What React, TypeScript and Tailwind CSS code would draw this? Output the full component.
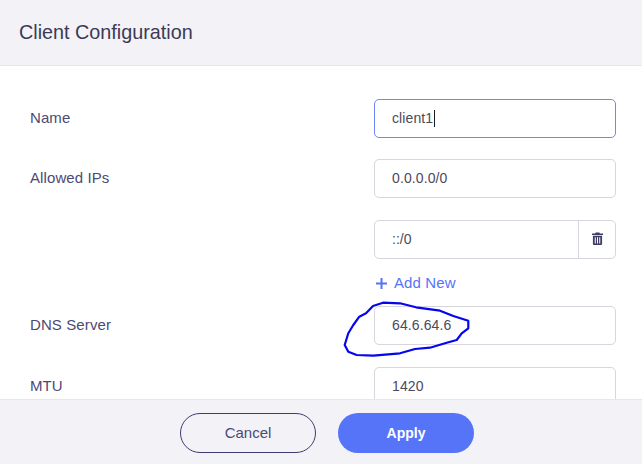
const fieldClass =
  "flex h-[39px] w-[242px] items-center rounded-[5px] border border-[#d6d6dc] bg-white pl-[17px] text-[14px] tracking-[0.1px] text-[#4a4a5a]";

function Label({ children }: { children: string }) {
  return <div className="w-[344px] shrink-0 text-[15px] leading-[37px] tracking-[0.1px] text-[#4b4a75]">{children}</div>;
}

function Field({ value }: { value: string }) {
  return <div className={fieldClass}>{value}</div>;
}

function TrashIcon() {
  return (
    <svg className="mb-[3px]" width="11" height="13" viewBox="0 0 12 14" aria-hidden="true">
      <path d="M4 0.5h4l.6 1H12v1.6H0V1.5h3.400z" fill="#3f3d66" />
      <path
        d="M1 4h10v8.600c0 .8-.6 1.400-1.400 1.400H2.400C1.600 14 1 13.400 1 12.600zM3 5.500v7h1.100v-7zM5.450 5.500v7h1.100v-7zM7.900 5.500v7H9v-7z"
        fill="#3f3d66"
        fillRule="evenodd"
      />
    </svg>
  );
}

function Scribble() {
  return (
    <svg
      className="pointer-events-none absolute left-[340px] top-[298px]"
      width="136"
      height="62"
      viewBox="340 298 136 62"
      fill="none"
      aria-hidden="true"
    >
      <path
        d="M416 307.300 L400 303.300 L383 302.700 L373 306 L366 313.300 L359.300 316.700 L353.300 325 L348.300 333.300 L344.700 345 L348.300 351.700 L356.700 355 L373.300 355.700 L400 353.300 L415 349 L430 347.700 L446.700 342.700 L456.700 340 L461.700 333.300 L468.300 328.300 L468.300 320.700 L453.300 316 L440 310.700 Z"
        stroke="#0505ee"
        strokeWidth="2.200"
        strokeLinejoin="round"
      />
    </svg>
  );
}

export default function App() {
  return (
    <div className="relative flex h-[464px] w-[642px] flex-col overflow-hidden bg-white font-['Liberation_Sans',Arial,sans-serif]">
      <header className="flex h-[66px] shrink-0 items-center border-b border-[#e6e6ee] bg-[#f2f2f7] pl-[19px] pt-[1px] text-[19.800px] text-[#3b3a55]">
        Client Configuration
      </header>

      <main className="min-h-0 flex-1 overflow-hidden pl-[30px] pt-[33px]">
        <div className="flex">
          <Label>Name</Label>
          <div className="flex h-[39px] w-[242px] items-center rounded-[5px] border border-[#6f88f9] bg-white pl-[17px] text-[14px] tracking-[0.1px] text-[#4a4a5a]">
            client1
            <span className="ml-px h-[17px] w-px bg-[#1a1a2a]" />
          </div>
        </div>

        <div className="mt-[21px] flex">
          <Label>Allowed IPs</Label>
          <Field value="0.0.0.0/0" />
        </div>

        <div className="mt-[22px] flex pl-[344px]">
          <div className="flex h-[39px] w-[242px] items-center rounded-[5px] border border-[#d6d6dc] bg-white text-[14px] text-[#4a4a5a]">
            <div className="flex-1 pl-[17px]">::/0</div>
            <div className="flex h-full w-[37px] items-center justify-center border-l border-[#d6d6dc]">
              <TrashIcon />
            </div>
          </div>
        </div>

        <div className="mt-[14px] flex h-[20px] items-center gap-[6px] pl-[345px] text-[15px] tracking-[0.1px] text-[#5674f8]">
          <svg width="13" height="13" viewBox="0 0 13 13" aria-hidden="true">
            <path d="M6.500 1v11M1 6.500h11" stroke="#5674f8" strokeWidth="2" />
          </svg>
          Add New
        </div>

        <div className="mt-[13px] flex">
          <Label>DNS Server</Label>
          <Field value="64.6.64.6" />
        </div>

        <div className="mt-[22px] flex">
          <Label>MTU</Label>
          <Field value="1420" />
        </div>
      </main>

      <footer className="flex h-[65px] shrink-0 items-start justify-center gap-[22px] border-t border-[#e6e6ee] bg-[#f2f2f7] pl-[12px] pt-[13px]">
        <button className="flex h-[40px] w-[136px] items-center justify-center rounded-full border border-[#3f3d70] text-[15px] text-[#4b4a75]">
          Cancel
        </button>
        <button className="flex h-[40px] w-[136px] items-center justify-center rounded-full bg-[#5674f8] text-[14px] font-bold text-white">
          Apply
        </button>
      </footer>

      <Scribble />
    </div>
  );
}
